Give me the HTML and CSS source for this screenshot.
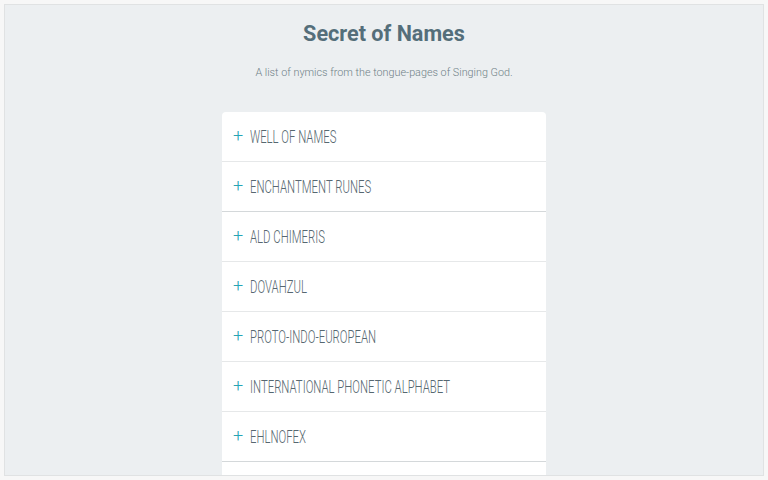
FILE: index.html
```html
<!DOCTYPE html>
<html lang="en">
<head>
  <meta charset="UTF-8">
  <meta name="viewport" content="width=device-width, initial-scale=1.0">
  <title>Secret of Names</title>
  <link rel="stylesheet" href="styles.css">
</head>
<body>
  <div class="frame">
    <header class="page-header">
      <h1 class="page-title">Secret of Names</h1>
      <p class="page-subtitle">A list of nymics from the tongue-pages of Singing God.</p>
    </header>

    <ul class="accordion">
      <li class="accordion-item"><span class="plus">+</span><span class="label">WELL OF NAMES</span></li>
      <li class="accordion-item dark"><span class="plus">+</span><span class="label">ENCHANTMENT RUNES</span></li>
      <li class="accordion-item"><span class="plus">+</span><span class="label">ALD CHIMERIS</span></li>
      <li class="accordion-item"><span class="plus">+</span><span class="label">DOVAHZUL</span></li>
      <li class="accordion-item"><span class="plus">+</span><span class="label">PROTO-INDO-EUROPEAN</span></li>
      <li class="accordion-item"><span class="plus">+</span><span class="label">INTERNATIONAL PHONETIC ALPHABET</span></li>
      <li class="accordion-item dark"><span class="plus">+</span><span class="label">EHLNOFEX</span></li>
      <li class="accordion-item"></li>
    </ul>
  </div>
</body>
</html>
```

FILE: styles.css
```css
* {
  box-sizing: border-box;
  margin: 0;
  padding: 0;
}

body {
  background-color: #f7f7f7;
  font-family: Roboto, "Liberation Sans", sans-serif;
  padding: 4px;
}

.frame {
  height: 472px;
  background-color: #eceff1;
  border: 1px solid #e0e2e3;
  overflow: hidden;
}

.page-header {
  text-align: center;
  padding-top: 16px;
}

.page-title {
  font-size: 21.6px;
  font-weight: 700;
  color: #546e7a;
  line-height: 26px;
}

.page-subtitle {
  margin-top: 19px;
  font-size: 10.8px;
  font-weight: 300;
  color: #6f7f87;
  line-height: 14px;
}

.accordion {
  list-style: none;
  width: 324px;
  margin: 32px auto 0;
  background-color: #ffffff;
  border-radius: 4px 4px 0 0;
}

.accordion-item {
  display: flex;
  align-items: center;
  height: 50px;
  padding: 0 0 1px 11px;
  border-bottom: 1px solid #e6e8e9;
  color: #566770;
}

.accordion-item.dark {
  border-bottom-color: #d4d8da;
}

.plus {
  flex-shrink: 0;
  width: 17px;
  font-size: 18px;
  font-weight: 300;
  color: #26a5b5;
  margin-top: -1px;
}

.label {
  display: inline-block;
  font-size: 18px;
  font-weight: 300;
  white-space: nowrap;
  transform: scaleX(0.63);
  transform-origin: left center;
}
```
